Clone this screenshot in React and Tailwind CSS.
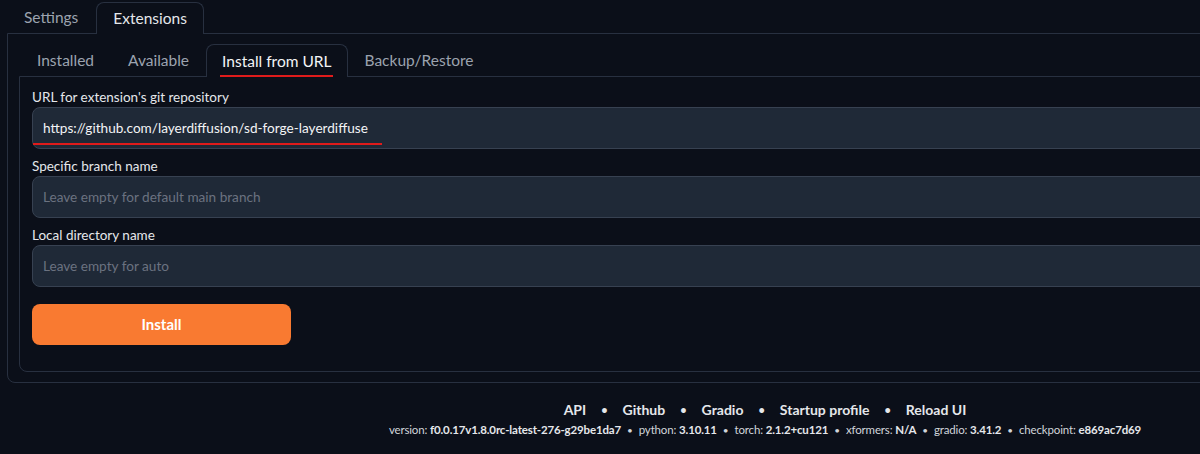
import React from "react";

const fields = [
  { label: "URL for extension's git repository", value: "https://github.com/layerdiffusion/sd-forge-layerdiffuse", mark: true },
  { label: "Specific branch name", placeholder: "Leave empty for default main branch" },
  { label: "Local directory name", placeholder: "Leave empty for auto" },
];

const innerTabs = ["Installed", "Available", "Install from URL", "Backup/Restore"];

const links = ["API", "Github", "Gradio", "Startup profile", "Reload UI"];

const versions = [
  ["version", "f0.0.17v1.8.0rc-latest-276-g29be1da7"],
  ["python", "3.10.11"],
  ["torch", "2.1.2+cu121"],
  ["xformers", "N/A"],
  ["gradio", "3.41.2"],
  ["checkpoint", "e869ac7d69"],
];

const Dot = () => <span className="mx-[6px] text-[10px]">•</span>;

export default function App() {
  return (
    <div
      className="h-[454px] w-[1200px] overflow-hidden bg-[#0b0f19] text-[#e5e7eb]"
      style={{ fontFamily: "Lato, 'Noto Sans', sans-serif" }}
    >
      <div className="w-[1530px] pl-[7px] pr-[7px] pt-[2px]">
        {/* top tabs */}
        <div className="flex h-[31px] pl-[1px]">
          <div className="flex items-center px-[16px] text-[15.5px] text-[#9ca3af]">Settings</div>
          <div className="relative -mb-px ml-[2px] flex items-center rounded-t-[8px] border border-b-0 border-[#283040] bg-[#0b0f19] px-[16px] text-[15.5px] text-[#e5e7eb]">
            Extensions
          </div>
        </div>

        <div className="rounded-b-[8px] border border-[#283040] px-[11px] pt-[10px] pb-[10px]">
          {/* inner tabs */}
          <div className="flex h-[32px] pl-[1px]">
            {innerTabs.map((t) =>
              t === "Install from URL" ? (
                <div
                  key={t}
                  className="relative -mb-px flex items-center rounded-t-[8px] border border-b-0 border-[#283040] bg-[#0b0f19] px-[15px] pt-[2px] text-[15.5px] text-[#f3f4f6]"
                >
                  {t}
                  <span className="absolute bottom-0 left-[13px] h-[2px] w-[113px] bg-[#e01b1b]" />
                </div>
              ) : (
                <div key={t} className="flex items-center px-[17px] pt-[2px] text-[15.5px] text-[#9ca3af]">
                  {t}
                </div>
              )
            )}
          </div>

          <div className="rounded-b-[8px] border border-[#283040] px-[12px] pt-[10px] pb-[26px]">
            <div className="flex flex-col gap-[7px]">
              {fields.map((f) => (
                <div key={f.label} className="flex flex-col">
                  <div className="h-[20px] text-[13.5px] leading-[20px] text-[#e5e7eb]">{f.label}</div>
                  <div className="relative flex h-[42px] items-center rounded-[8px] border border-[#374151] bg-[#1f2937] px-[10px] text-[13.6px]">
                    {f.value ? (
                      <span className="text-[#f3f4f6]">{f.value}</span>
                    ) : (
                      <span className="text-[#6b7280]">{f.placeholder}</span>
                    )}
                    {f.mark && (
                      <span className="absolute bottom-[3px] left-0 h-[2px] w-[349px] bg-[#e01b1b]" />
                    )}
                  </div>
                </div>
              ))}
            </div>

            <button className="mt-[17px] flex h-[41px] w-[259px] items-center justify-center rounded-[8px] bg-[#f97a31] text-[15px] font-bold text-white">
              Install
            </button>
          </div>
        </div>

        {/* footer */}
        <div className="mt-[17px] flex flex-col items-center">
          <div className="flex items-center text-[14px] font-bold leading-[20px] text-[#e5e7eb]">
            {links.map((l, i) => (
              <React.Fragment key={l}>
                {i > 0 && <span className="mx-[15px] text-[11px]">•</span>}
                <span>{l}</span>
              </React.Fragment>
            ))}
          </div>
          <div className="mt-[1px] flex items-center text-[11.5px] leading-[18px] tracking-[-0.15px] text-[#d1d5db]">
            {versions.map(([k, v], i) => (
              <React.Fragment key={k}>
                {i > 0 && <Dot />}
                <span>
                  {k}: <span className="font-bold text-[#e5e7eb]">{v}</span>
                </span>
              </React.Fragment>
            ))}
          </div>
        </div>
      </div>
    </div>
  );
}
